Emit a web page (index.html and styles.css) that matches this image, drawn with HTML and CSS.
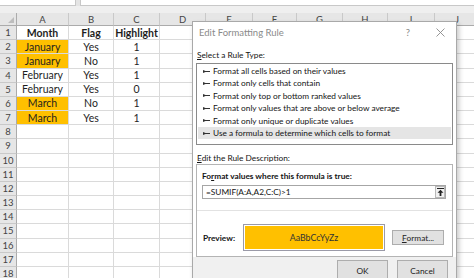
FILE: index.html
```html
<!DOCTYPE html>
<html>
<head>
<meta charset="utf-8">
<link rel="stylesheet" href="styles.css">
</head>
<body>
<div class="topbar"><div class="namebox"></div><div class="fbox"></div></div>
<div class="strip"></div>
<div class="grid">
  <div class="corner"><span class="tri"></span></div>
  <div class="ch">A</div><div class="ch">B</div><div class="ch">C</div><div class="ch">D</div><div class="ch">E</div><div class="ch">F</div><div class="ch">G</div><div class="ch">H</div><div class="ch">I</div><div class="ch">J</div>

  <div class="rh">1</div><div class="c b">Month</div><div class="c b">Flag</div><div class="c b">Highlight</div><div class="c"></div><div class="c"></div><div class="c"></div><div class="c"></div><div class="c"></div><div class="c"></div><div class="c"></div>
  <div class="rh">2</div><div class="c o">January</div><div class="c">Yes</div><div class="c">1</div><div class="c"></div><div class="c"></div><div class="c"></div><div class="c"></div><div class="c"></div><div class="c"></div><div class="c"></div>
  <div class="rh">3</div><div class="c o">January</div><div class="c">No</div><div class="c">1</div><div class="c"></div><div class="c"></div><div class="c"></div><div class="c"></div><div class="c"></div><div class="c"></div><div class="c"></div>
  <div class="rh">4</div><div class="c">February</div><div class="c">Yes</div><div class="c">1</div><div class="c"></div><div class="c"></div><div class="c"></div><div class="c"></div><div class="c"></div><div class="c"></div><div class="c"></div>
  <div class="rh">5</div><div class="c">February</div><div class="c">Yes</div><div class="c">0</div><div class="c"></div><div class="c"></div><div class="c"></div><div class="c"></div><div class="c"></div><div class="c"></div><div class="c"></div>
  <div class="rh">6</div><div class="c o">March</div><div class="c">No</div><div class="c">1</div><div class="c"></div><div class="c"></div><div class="c"></div><div class="c"></div><div class="c"></div><div class="c"></div><div class="c"></div>
  <div class="rh">7</div><div class="c o">March</div><div class="c">Yes</div><div class="c">1</div><div class="c"></div><div class="c"></div><div class="c"></div><div class="c"></div><div class="c"></div><div class="c"></div><div class="c"></div>
  <div class="rh">8</div><div class="c"></div><div class="c"></div><div class="c"></div><div class="c"></div><div class="c"></div><div class="c"></div><div class="c"></div><div class="c"></div><div class="c"></div><div class="c"></div>
  <div class="rh">9</div><div class="c"></div><div class="c"></div><div class="c"></div><div class="c"></div><div class="c"></div><div class="c"></div><div class="c"></div><div class="c"></div><div class="c"></div><div class="c"></div>
  <div class="rh">10</div><div class="c"></div><div class="c"></div><div class="c"></div><div class="c"></div><div class="c"></div><div class="c"></div><div class="c"></div><div class="c"></div><div class="c"></div><div class="c"></div>
  <div class="rh">11</div><div class="c"></div><div class="c"></div><div class="c"></div><div class="c"></div><div class="c"></div><div class="c"></div><div class="c"></div><div class="c"></div><div class="c"></div><div class="c"></div>
  <div class="rh">12</div><div class="c"></div><div class="c"></div><div class="c"></div><div class="c"></div><div class="c"></div><div class="c"></div><div class="c"></div><div class="c"></div><div class="c"></div><div class="c"></div>
  <div class="rh">13</div><div class="c"></div><div class="c"></div><div class="c"></div><div class="c"></div><div class="c"></div><div class="c"></div><div class="c"></div><div class="c"></div><div class="c"></div><div class="c"></div>
  <div class="rh">14</div><div class="c"></div><div class="c"></div><div class="c"></div><div class="c"></div><div class="c"></div><div class="c"></div><div class="c"></div><div class="c"></div><div class="c"></div><div class="c"></div>
  <div class="rh">15</div><div class="c"></div><div class="c"></div><div class="c"></div><div class="c"></div><div class="c"></div><div class="c"></div><div class="c"></div><div class="c"></div><div class="c"></div><div class="c"></div>
  <div class="rh">16</div><div class="c"></div><div class="c"></div><div class="c"></div><div class="c"></div><div class="c"></div><div class="c"></div><div class="c"></div><div class="c"></div><div class="c"></div><div class="c"></div>
  <div class="rh">17</div><div class="c"></div><div class="c"></div><div class="c"></div><div class="c"></div><div class="c"></div><div class="c"></div><div class="c"></div><div class="c"></div><div class="c"></div><div class="c"></div>
  <div class="rh">18</div><div class="c"></div><div class="c"></div><div class="c"></div><div class="c"></div><div class="c"></div><div class="c"></div><div class="c"></div><div class="c"></div><div class="c"></div><div class="c"></div>
</div>

<div class="dialog">
  <div class="titlebar">
    <span class="title">Edit Formatting Rule</span>
    <span class="help">?</span>
    <svg class="close" width="9" height="9" viewBox="0 0 9 9"><path d="M0.5 0.5 L8.5 8.5 M8.5 0.5 L0.5 8.5" stroke="#8a8a8a" stroke-width="0.9" fill="none"/></svg>
  </div>
  <div class="body">
    <div class="label"><u>S</u>elect a Rule Type:</div>
    <div class="listbox">
      <div class="item"><svg class="arr" width="7" height="5" viewBox="0 0 7 5"><polygon points="0,1 2.5,2 7,2.1 7,2.9 2.5,3 0,4" fill="#333"/></svg>Format all cells based on their values</div>
      <div class="item"><svg class="arr" width="7" height="5" viewBox="0 0 7 5"><polygon points="0,1 2.5,2 7,2.1 7,2.9 2.5,3 0,4" fill="#333"/></svg>Format only cells that contain</div>
      <div class="item"><svg class="arr" width="7" height="5" viewBox="0 0 7 5"><polygon points="0,1 2.5,2 7,2.1 7,2.9 2.5,3 0,4" fill="#333"/></svg>Format only top or bottom ranked values</div>
      <div class="item"><svg class="arr" width="7" height="5" viewBox="0 0 7 5"><polygon points="0,1 2.5,2 7,2.1 7,2.9 2.5,3 0,4" fill="#333"/></svg>Format only values that are above or below average</div>
      <div class="item"><svg class="arr" width="7" height="5" viewBox="0 0 7 5"><polygon points="0,1 2.5,2 7,2.1 7,2.9 2.5,3 0,4" fill="#333"/></svg>Format only unique or duplicate values</div>
      <div class="item sel"><svg class="arr" width="7" height="5" viewBox="0 0 7 5"><polygon points="0,1 2.5,2 7,2.1 7,2.9 2.5,3 0,4" fill="#333"/></svg>Use a formula to determine which cells to format</div>
    </div>
    <div class="label label2"><u>E</u>dit the Rule Description:</div>
    <div class="group">
      <div class="sec1">
        <div class="bold">Fo<u>r</u>mat values where this formula is true:</div>
        <div class="input">
          <span class="formula">=SUMIF(A:A,A2,C:C)&gt;1</span>
          <span class="collapse"><svg width="7" height="8" viewBox="0 0 7 8"><rect x="0" y="0" width="7" height="1" fill="#222"/><polygon points="3.5,1.8 0.5,4.8 2.6,4.8 2.6,8 4.4,8 4.4,4.8 6.5,4.8" fill="#222"/></svg></span>
        </div>
      </div>
      <div class="sec2">
        <span class="bold plabel">Preview:</span>
        <div class="preview"><div class="pinner">AaBbCcYyZz</div></div>
        <div class="btn fmt"><u>F</u>ormat...</div>
      </div>
    </div>
  </div>
  <div class="footer">
    <div class="btn big">OK</div>
    <div class="btn big">Cancel</div>
  </div>
</div>
</body>
</html>
```

FILE: styles.css
```css
html, body {
  margin: 0;
  padding: 0;
}
body {
  width: 474px;
  height: 278px;
  overflow: hidden;
  position: relative;
  background: #ffffff;
  font-family: Lato, "Liberation Sans", sans-serif;
}
.topbar {
  height: 6px;
  display: flex;
  background: #e4e4e4;
  box-sizing: border-box;
}
.namebox {
  width: 76px;
  background: #fff;
  border-bottom: 1px solid #c8c8c8;
  border-right: 1px solid #c8c8c8;
  box-sizing: border-box;
}
.fbox {
  flex: 1;
  margin-left: 4px;
  background: #fff;
  border-bottom: 1px solid #c8c8c8;
  border-left: 1px solid #c8c8c8;
  box-sizing: border-box;
}
.strip {
  height: 7px;
  background: #efefef;
}
.grid {
  display: grid;
  grid-template-columns: 17px 52px 45px 46px 46px 47px 44px 46px 45px 47px 45px;
  grid-template-rows: 13px repeat(18, 14.18px);
}
.grid > div {
  box-sizing: border-box;
  display: flex;
  align-items: center;
  justify-content: center;
  overflow: hidden;
  white-space: nowrap;
}
.corner {
  background: #e6e6e6;
  border-right: 1px solid #ababab;
  border-bottom: 1px solid #ababab;
  position: relative;
}
.tri {
  position: absolute;
  right: 2px;
  bottom: 2px;
  width: 0;
  height: 0;
  border-left: 6px solid transparent;
  border-bottom: 6px solid #bdbdbd;
}
.ch {
  background: #e6e6e6;
  border-right: 1px solid #c9c9c9;
  border-bottom: 1px solid #ababab;
  color: #444;
  font-size: 9.5px;
}
.rh {
  background: #e6e6e6;
  border-right: 1px solid #ababab;
  border-bottom: 1px solid #c9c9c9;
  color: #444;
  font-size: 9.5px;
}
.c {
  border-right: 1px solid #dadada;
  border-bottom: 1px solid #dadada;
  color: #1e1e1e;
  font-size: 10.5px;
}
.c.b {
  font-weight: bold;
}
.c.o {
  background: #ffc000;
}

/* dialog */
.dialog {
  position: absolute;
  left: 192px;
  top: 21px;
  width: 265px;
  height: 262px;
  box-sizing: border-box;
  background: #ffffff;
  border: 1px solid #a9a9a9;
  box-shadow: 2px 3px 5px rgba(0, 0, 0, 0.22);
  display: flex;
  flex-direction: column;
  font-family: Lato, "Liberation Sans", sans-serif;
  font-size: 8.3px;
  color: #141414;
}
.titlebar {
  height: 22px;
  display: flex;
  align-items: center;
  padding-left: 6px;
}
.title {
  flex: 1;
  color: #8a8a8a;
  font-size: 9.5px;
}
.help {
  color: #8a8a8a;
  font-size: 9.5px;
  margin-right: 26px;
}
.close {
  margin-right: 11px;
}
.body {
  padding: 0 3px;
}
.label {
  margin-top: 7px;
  height: 12px;
  line-height: 12px;
  padding-left: 1px;
}
.label2 {
  margin-top: 7px;
}
.listbox {
  margin-top: 2px;
  height: 82px;
  box-sizing: border-box;
  border: 1px solid #8a8a8a;
  padding: 1px;
}
.item {
  height: 12.4px;
  line-height: 12.4px;
  padding-left: 5px;
  display: flex;
  align-items: center;
  white-space: nowrap;
}
.item.sel {
  background: #e5e5e5;
}
.arr {
  margin-right: 3px;
  flex: none;
}
.group {
  height: 93px;
  box-sizing: border-box;
  border: 1px solid #b4b4b4;
  display: flex;
  flex-direction: column;
}
.sec1 {
  height: 46px;
  box-sizing: border-box;
  border-bottom: 1px solid #e2e2e2;
  padding: 5px 6px 0 5px;
}
.bold {
  font-weight: bold;
  height: 12px;
  line-height: 12px;
}
.input {
  margin-top: 3px;
  height: 14px;
  box-sizing: border-box;
  border: 1px solid #a6a6a6;
  display: flex;
  align-items: center;
  padding-left: 3px;
}
.formula {
  flex: 1;
}
.collapse {
  width: 10px;
  height: 12px;
  box-sizing: border-box;
  border: 1px solid #b8b8b8;
  margin-right: 0;
  background: #f0f0f0;
  display: flex;
  align-items: center;
  justify-content: center;
}
.sec2 {
  flex: 1;
  display: flex;
  align-items: center;
  padding: 8px 0 0 6px;
}
.plabel {
  width: 40px;
}
.preview {
  width: 142px;
  height: 27px;
  box-sizing: border-box;
  border: 1px solid #9a9aa8;
  padding: 1px;
  background: #fff;
}
.pinner {
  height: 100%;
  background: #ffc000;
  display: flex;
  align-items: center;
  justify-content: center;
  font-size: 8.8px;
  color: #333;
}
.btn {
  box-sizing: border-box;
  background: #e1e1e1;
  border: 1px solid #adadad;
  display: flex;
  align-items: center;
  justify-content: center;
  color: #222;
}
.fmt {
  width: 52px;
  height: 15px;
  margin-left: 7px;
}
.footer {
  flex: 1;
  background: #f0f0f0;
  display: flex;
  justify-content: flex-end;
  align-items: flex-start;
  gap: 9px;
  padding: 3px 8px 0 0;
}
.big {
  width: 51px;
  height: 22px;
}
```
